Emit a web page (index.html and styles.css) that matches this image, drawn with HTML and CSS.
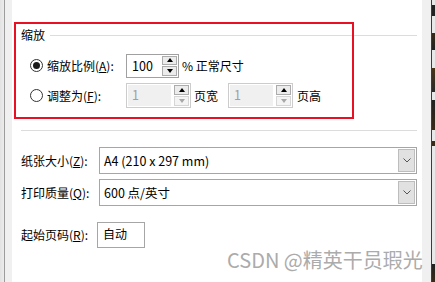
FILE: index.html
```html
<!DOCTYPE html>
<html lang="zh-CN">
<head>
    <meta charset="UTF-8">
    <title>页面设置</title>
    <link rel="stylesheet" href="styles.css">
</head>
<body>
    <div class="edge-left"></div>

    <!-- Dialog panel -->
    <div class="panel">
        <div class="group-head"><span>缩放</span></div>

        <div class="opt-row">
            <span class="radio checked"></span>
            <span class="opt-label">缩放比例(<u>A</u>):</span>
            <div class="spin spin-short">
                <span class="spin-text">100</span>
                <div class="spin-btns">
                    <span class="spin-btn"><i class="tri up"></i></span>
                    <span class="spin-btn"><i class="tri down"></i></span>
                </div>
            </div>
            <span class="after-spin">% 正常尺寸</span>
        </div>

        <div class="opt-row row-gap">
            <span class="radio"></span>
            <span class="opt-label">调整为(<u>F</u>):</span>
            <div class="spin disabled">
                <span class="spin-text">1</span>
                <div class="spin-btns">
                    <span class="spin-btn"><i class="tri up"></i></span>
                    <span class="spin-btn"><i class="tri down"></i></span>
                </div>
            </div>
            <span class="after-spin">页宽</span>
            <div class="spin disabled spin-second">
                <span class="spin-text">1</span>
                <div class="spin-btns">
                    <span class="spin-btn"><i class="tri up"></i></span>
                    <span class="spin-btn"><i class="tri down"></i></span>
                </div>
            </div>
            <span class="after-spin last">页高</span>
        </div>

        <div class="divider"></div>

        <div class="field-row first">
            <span class="field-label">纸张大小(<u>Z</u>):</span>
            <div class="combo">
                <span class="combo-text">A4 (210 x 297 mm)</span>
                <span class="combo-btn">
                    <svg width="8" height="5" viewBox="0 0 8 5"><path d="M0.5 0.5 L4 4 L7.5 0.5" fill="none" stroke="#555" stroke-width="1"/></svg>
                </span>
            </div>
        </div>

        <div class="field-row second">
            <span class="field-label">打印质量(<u>Q</u>):</span>
            <div class="combo">
                <span class="combo-text">600 点/英寸</span>
                <span class="combo-btn">
                    <svg width="8" height="5" viewBox="0 0 8 5"><path d="M0.5 0.5 L4 4 L7.5 0.5" fill="none" stroke="#555" stroke-width="1"/></svg>
                </span>
            </div>
        </div>

        <div class="field-row third">
            <span class="field-label short">起始页码(<u>R</u>):</span>
            <div class="text-box">自动</div>
        </div>

        <!-- annotation + watermark over the dialog -->
        <div class="highlight"></div>
        <div class="watermark">CSDN @精英干员瑕光</div>
    </div>

    <div class="edge-right"><div class="bits"></div></div>
</body>
</html>
```

FILE: styles.css
```css
/* General */
body {
    margin: 0;
    width: 435px;
    height: 282px;
    overflow: hidden;
    display: flex;
    background: #f0f0f0;
    font-family: "Noto Sans CJK SC", "Noto Sans", sans-serif;
    font-size: 12px;
    color: #000;
}

u {
    text-decoration: underline;
    text-underline-offset: 1px;
}

/* Window edges */
.edge-left {
    width: 12px;
    flex-shrink: 0;
    background: linear-gradient(to right, #e2e2e2 0, #ececec 4px, #9c9c9c 4px, #9c9c9c 5px, #f0f0f0 5px);
}

.edge-right {
    width: 13px;
    flex-shrink: 0;
    display: flex;
    background: #f0f0f0;
}

.bits {
    margin-left: 9px;
    width: 4px;
    border-left: 1px solid #3c3c3c;
    box-sizing: border-box;
    background: linear-gradient(to bottom,
        #e8e8e8 0, #e8e8e8 5px, #222 5px, #222 16px,
        #e8e8e8 16px, #e8e8e8 33px, #3a2a18 33px, #222 50px,
        #e8e8e8 50px, #e8e8e8 68px, #4a3418 68px, #2a2a2a 92px,
        #e8e8e8 92px, #e8e8e8 100px, #222 100px, #3a2a18 130px,
        #e8e8e8 130px, #e8e8e8 141px, #3a2a18 141px, #3a2a18 146px,
        #e8e8e8 146px, #e8e8e8 264px, #222 264px, #3a2a18 282px);
}

/* Panel */
.panel {
    position: relative;
    width: 410px;
    flex-shrink: 0;
    background: #fff;
    padding: 0 5px 0 9px;
    box-sizing: border-box;
}

.group-head {
    margin-top: 27px;
    height: 16px;
    display: flex;
    align-items: center;
    line-height: 16px;
}

.group-head::after {
    content: "";
    flex: 1;
    margin-left: 5px;
    border-top: 1px solid #dcdcdc;
}

/* Option rows */
.opt-row {
    display: flex;
    align-items: center;
    height: 25px;
    margin-top: 10px;
    padding-left: 9px;
    line-height: 16px;
}

.opt-row.row-gap {
    margin-top: 5px;
}

.radio {
    width: 13px;
    height: 13px;
    box-sizing: border-box;
    border: 1px solid #333;
    border-radius: 50%;
    background: #fff;
    display: flex;
    align-items: center;
    justify-content: center;
    flex-shrink: 0;
}

.radio.checked::after {
    content: "";
    width: 7px;
    height: 7px;
    border-radius: 50%;
    background: #1a1a1a;
}

.opt-label {
    width: 79px;
    margin-left: 4px;
}

/* Spin box */
.spin {
    width: 65px;
    height: 25px;
    box-sizing: border-box;
    border: 1px solid #a0a0a0;
    padding: 1px;
    display: flex;
    background: #fff;
}

.spin-short {
    width: 53px;
    height: 24px;
}

.spin-text {
    flex: 1;
    padding-left: 4px;
    line-height: 20px;
    font-size: 12.5px;
}

.spin-btns {
    width: 15px;
    display: flex;
    flex-direction: column;
    gap: 1px;
}

.spin-btn {
    flex: 1;
    border: 1px solid #acacac;
    background: #ececec;
    display: flex;
    align-items: center;
    justify-content: center;
}

.tri {
    width: 0;
    height: 0;
    border-left: 3.5px solid transparent;
    border-right: 3.5px solid transparent;
}

.tri.up {
    border-bottom: 4px solid #000;
}

.tri.down {
    border-top: 4px solid #000;
}

.spin.disabled {
    border-color: #cccccc;
}

.spin.disabled .spin-text {
    background: #f0f0f0;
    color: #a0a0a0;
    margin-right: 3px;
}

.spin.disabled .spin-btn:last-child {
    border-color: #d6d6d6;
    background: #f4f4f4;
}

.spin.disabled .tri.down {
    border-top-color: #a8a8a8;
}

.spin-second {
    margin-left: 10px;
}

.after-spin {
    margin-left: 3px;
}

.after-spin.last {
    margin-left: 4px;
}

/* Divider */
.divider {
    margin-top: 22px;
    border-top: 1px solid #dcdcdc;
}

/* Field rows */
.field-row {
    display: flex;
    align-items: center;
    line-height: 16px;
}

.field-row.first {
    margin-top: 16px;
}

.field-row.second {
    margin-top: 5px;
}

.field-row.third {
    margin-top: 16px;
}

.field-label {
    width: 78px;
}

.field-label.short {
    width: 76px;
}

.combo {
    flex: 1;
    height: 27px;
    box-sizing: border-box;
    border: 1px solid #a6a6a6;
    display: flex;
    align-items: stretch;
    background: #fff;
}

.combo-text {
    flex: 1;
    padding-left: 4px;
    line-height: 25px;
    font-size: 12.5px;
}

.combo-btn {
    width: 15px;
    margin: 1px;
    border: 1px solid #bdbdbd;
    background: #e1e1e1;
    display: flex;
    align-items: center;
    justify-content: center;
}

.text-box {
    width: 48px;
    height: 26px;
    box-sizing: border-box;
    border: 1px solid #a6a6a6;
    padding-left: 5px;
    line-height: 22px;
}

/* Overlays */
.highlight {
    position: absolute;
    left: 2px;
    top: 22px;
    width: 340px;
    height: 97px;
    box-sizing: border-box;
    border: 2px solid #e81123;
}

.watermark {
    position: absolute;
    left: 215px;
    top: 247px;
    font-size: 20px;
    line-height: 26px;
    color: #ababab;
    white-space: nowrap;
}
```
